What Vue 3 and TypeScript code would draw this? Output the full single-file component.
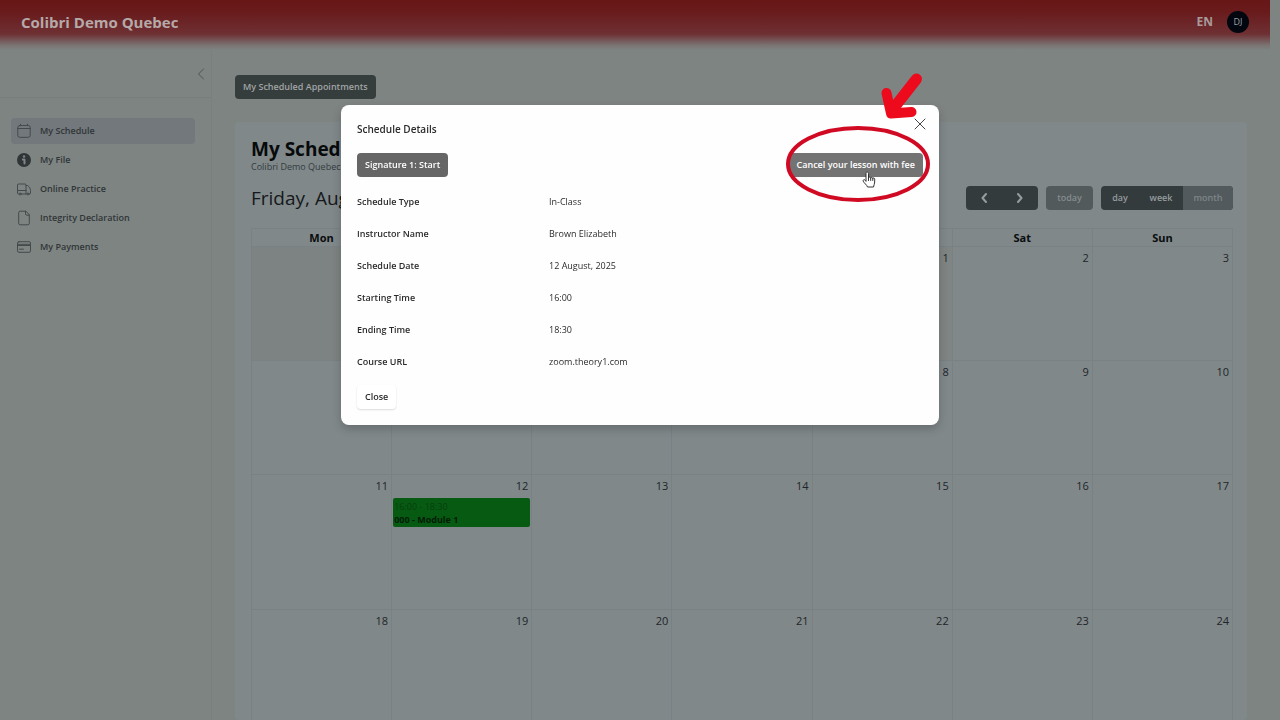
<script setup lang="ts">
interface Cell {
  day: number
  outside?: boolean
  today?: boolean
  event?: { time: string; title: string }
}

const weekdays: string[] = ['Mon', 'Tue', 'Wed', 'Thu', 'Fri', 'Sat', 'Sun']

const weeks: Cell[][] = [
  [
    { day: 28, outside: true },
    { day: 29, outside: true },
    { day: 30, outside: true },
    { day: 31, outside: true },
    { day: 1, today: true },
    { day: 2 },
    { day: 3 },
  ],
  [4, 5, 6, 7, 8, 9, 10].map((day) => ({ day })),
  [11, 12, 13, 14, 15, 16, 17].map((day) =>
    day === 12 ? { day, event: { time: '16:00 - 18:30', title: '000 - Module 1' } } : { day },
  ),
  [18, 19, 20, 21, 22, 23, 24].map((day) => ({ day })),
]

const menu = [
  { label: 'My Schedule', icon: 'calendar' },
  { label: 'My File', icon: 'info' },
  { label: 'Online Practice', icon: 'truck' },
  { label: 'Integrity Declaration', icon: 'file' },
  { label: 'My Payments', icon: 'card' },
]

const details = [
  { label: 'Schedule Type', value: 'In-Class' },
  { label: 'Instructor Name', value: 'Brown Elizabeth' },
  { label: 'Schedule Date', value: '12 August, 2025' },
  { label: 'Starting Time', value: '16:00' },
  { label: 'Ending Time', value: '18:30' },
  { label: 'Course URL', value: 'zoom.theory1.com' },
]
</script>

<template>
  <div class="page">
    <header class="topbar">
      <h1 class="brand">Colibri Demo Quebec</h1>
      <div class="account">
        <button class="lang" type="button">EN</button>
        <button class="avatar" type="button">DJ</button>
      </div>
    </header>

    <div class="body">
      <aside class="sidebar">
        <div class="sidebar-top">
          <button class="collapse" type="button" aria-label="Collapse menu">
            <svg viewBox="0 0 8 12" width="8" height="12"><path d="M6.5 1 1.5 6l5 5" /></svg>
          </button>
        </div>
        <nav class="menu">
          <a v-for="(item, i) in menu" :key="item.label" href="#" class="item" :class="{ active: i === 0 }">
            <svg class="icon" viewBox="0 0 16 16" width="16" height="16">
              <g v-if="item.icon === 'calendar'">
                <rect x="1.8" y="2.500" width="12.400" height="11.800" rx="2" />
                <path d="M1.800 5.500h12.400M4.500 1.200v1.300M11.500 1.200v1.300" />
              </g>
              <g v-else-if="item.icon === 'info'">
                <circle class="solid" cx="8" cy="8" r="7" />
                <circle class="hole" cx="8" cy="4.500" r="1.200" />
                <path class="stem" d="M6.800 7.500H8.500V11.500" />
              </g>
              <g v-else-if="item.icon === 'truck'">
                <path d="M3 13h-.5a1 1 0 0 1-1-1V4a1 1 0 0 1 1-1h6.500a1 1 0 0 1 1 1v9H5.500M10 4.500h1.500c2 1.200 3 3.200 3 5V12a1 1 0 0 1-1 1M1.500 9.500H10M10 13h.8" />
                <circle cx="4.200" cy="13" r="1" />
                <circle cx="12" cy="13" r="1" />
              </g>
              <g v-else-if="item.icon === 'file'">
                <path d="M9.500 1.200H4.200a1.500 1.500 0 0 0-1.500 1.500v10.600a1.500 1.500 0 0 0 1.500 1.500h7.600a1.500 1.500 0 0 0 1.500-1.500V5.200zM9.500 1.200v2.500a1.500 1.500 0 0 0 1.500 1.500h2.300" />
              </g>
              <g v-else>
                <rect x="1.500" y="2.700" width="13" height="10.600" rx="1.500" />
                <path d="M1.500 5.300h13M1.500 6.500h13M3.500 10.200h4" />
              </g>
            </svg>
            <span>{{ item.label }}</span>
          </a>
        </nav>
      </aside>

      <main class="content">
        <button class="btn dark appointments" type="button">My Scheduled Appointments</button>
        <section class="card">
          <h2 class="title">My Schedule</h2>
          <p class="subtitle">Colibri Demo Quebec</p>
          <div class="toolbar">
            <p class="date">Friday, August 1, 2025</p>
            <div class="tools">
              <div class="group arrows">
                <button type="button" aria-label="Previous">
                  <svg viewBox="0 0 6 10" width="6" height="10"><path d="M5 1 1.500 5 5 9" /></svg>
                </button>
                <button type="button" aria-label="Next">
                  <svg viewBox="0 0 6 10" width="6" height="10"><path d="M1 1l3.500 4L1 9" /></svg>
                </button>
              </div>
              <button class="today" type="button">today</button>
              <div class="group views">
                <button type="button">day</button>
                <button type="button">week</button>
                <button type="button" class="current">month</button>
              </div>
            </div>
          </div>
          <table class="calendar">
            <thead>
              <tr>
                <th v-for="d in weekdays" :key="d" scope="col">{{ d }}</th>
              </tr>
            </thead>
            <tbody>
              <tr v-for="(week, w) in weeks" :key="w" :class="{ tall: w > 1 }">
                <td v-for="cell in week" :key="cell.day" :class="{ outside: cell.outside, now: cell.today }">
                  <div class="day">{{ cell.day }}</div>
                  <a v-if="cell.event" class="event" href="#">
                    <span class="event-time">{{ cell.event.time }}</span>
                    <span class="event-title">{{ cell.event.title }}</span>
                  </a>
                </td>
              </tr>
            </tbody>
          </table>
        </section>
      </main>
    </div>

    <div class="overlay">
      <section class="dialog" role="dialog" aria-modal="true" aria-labelledby="dialog-title">
        <button class="dismiss" type="button" aria-label="Dismiss">
          <svg viewBox="0 0 12 12" width="12" height="12"><path d="M1 1l10 10M11 1 1 11" /></svg>
        </button>
        <h2 id="dialog-title" class="dialog-title">Schedule Details</h2>
        <div class="actions">
          <button class="btn gray" type="button">Signature 1: Start</button>
          <div class="cancel-wrap">
            <button class="btn gray light" type="button">Cancel your lesson with fee</button>
            <svg class="marker" viewBox="0 0 150 136" width="150" height="136" aria-hidden="true">
              <ellipse cx="75" cy="95" rx="70" ry="36" />
              <path class="shaft" d="M133.500 10 110 40" />
              <path class="head" d="M103.500 24 108 44.500 128.500 43" />
            </svg>
            <svg class="pointer" viewBox="0 0 14 18" width="14" height="18" aria-hidden="true">
              <path d="M4 10V2.500C4 .5 6.500.5 6.500 2.500V7c0-1.300 2.200-1.200 2.200.2 0-1.200 2.100-1 2.100.3 0-1 1.900-.8 1.900.6V11c0 2-1 3-1.200 5H5.500C5 14 2 12 1.200 10.200.8 8.800 2.200 8 3 9z" />
              <path d="M6.500 7v2.500M8.700 7.200v2.300M10.800 7.500v2" />
            </svg>
          </div>
        </div>
        <dl class="details">
          <div v-for="row in details" :key="row.label" class="row">
            <dt>{{ row.label }}</dt>
            <dd>{{ row.value }}</dd>
          </div>
        </dl>
        <button class="btn close" type="button">Close</button>
      </section>
    </div>
  </div>
</template>

<style>
body {
  background: #7e8482;
  overflow: hidden;
}
</style>

<style scoped>
* {
  box-sizing: border-box;
}
.page {
  height: 100vh;
  overflow: hidden;
  display: flex;
  flex-direction: column;
  background: #7e8482;
  color: #2a3032;
  font-family: 'Open Sans', 'Noto Sans', sans-serif;
  font-size: 9px;
  line-height: 12px;
}
button {
  border: 0;
  padding: 0;
  background: none;
  font: inherit;
  color: inherit;
  cursor: pointer;
}
h1,
h2,
p,
dl,
dd {
  margin: 0;
}
svg {
  display: block;
  fill: none;
  stroke: currentColor;
  stroke-linecap: round;
  stroke-linejoin: round;
}
.topbar {
  height: 50px;
  flex: none;
  margin-right: 10px;
  padding: 0 21px 6px;
  display: flex;
  align-items: center;
  justify-content: space-between;
  background: linear-gradient(#681616 0, #691b1c 12px, #6e3033 34px, #7a7271 45px, #7e8482 50px);
}
.brand {
  font-size: 15px;
  line-height: 20px;
  font-weight: 700;
  color: #b5a9a9;
}
.account {
  display: flex;
  align-items: center;
  gap: 14px;
}
.lang {
  font-size: 12px;
  font-weight: 700;
  color: #a99b9c;
}
.avatar {
  width: 22px;
  height: 22px;
  border-radius: 50%;
  background: #02060f;
  color: #9aa1a6;
}
.body {
  flex: 1;
  min-height: 0;
  display: flex;
}
.sidebar {
  width: 212px;
  flex: none;
  border-right: 1px solid #7a807f;
}
.sidebar-top {
  height: 48px;
  border-bottom: 1px solid #787e7d;
  display: flex;
  align-items: center;
  justify-content: flex-end;
  padding-right: 6px;
}
.collapse {
  color: #4d5454;
}
.menu {
  padding: 20px 16px 0 11px;
  display: flex;
  flex-direction: column;
  gap: 3px;
}
.item {
  height: 26px;
  padding-left: 5px;
  border-radius: 4px;
  display: flex;
  align-items: center;
  gap: 8px;
  color: #303638;
  font-weight: 600;
  text-decoration: none;
}
.item.active {
  background: #73787c;
}
.icon {
  color: #444a4c;
}
.solid {
  fill: #303537;
  stroke: none;
}
.hole {
  fill: #7e8482;
  stroke: none;
}
.stem {
  stroke: #7e8482;
  stroke-width: 2;
}
.content {
  flex: 1;
  min-width: 0;
  padding: 25px 33px 0 23px;
  display: flex;
  flex-direction: column;
  align-items: flex-start;
}
.btn {
  height: 24px;
  padding: 0 8px;
  border-radius: 4px;
  font-weight: 600;
  white-space: nowrap;
}
.dark {
  background: #363d3d;
  color: #a0a5a5;
}
.card {
  align-self: stretch;
  flex: 1;
  min-height: 0;
  overflow: hidden;
  margin-top: 23px;
  padding: 16px 14px 0 16px;
  border-radius: 4px;
  background: #80888a;
}
.title {
  font-size: 19px;
  line-height: 23px;
  font-weight: 700;
  color: #070a0b;
}
.subtitle {
  color: #343b3e;
}
.toolbar {
  margin-top: 9px;
  display: flex;
  justify-content: space-between;
  align-items: center;
}
.date {
  font-size: 19px;
  line-height: 32px;
  color: #15191b;
}
.tools {
  display: flex;
  gap: 8px;
}
.group {
  display: flex;
  border-radius: 4px;
  overflow: hidden;
  background: #343b3d;
}
.tools button {
  height: 24px;
  display: flex;
  align-items: center;
  justify-content: center;
  color: #959c9e;
  font-weight: 600;
}
.arrows button {
  width: 36px;
}
.arrows svg {
  stroke-width: 2;
}
.tools .today {
  width: 47px;
  border-radius: 4px;
  background: #525a5c;
  color: #858c8e;
}
.views button:nth-child(1) {
  width: 38px;
}
.views button:nth-child(2) {
  width: 44px;
}
.views .current {
  width: 50px;
  background: #525a5d;
  color: #7e8688;
}
.calendar {
  width: 100%;
  margin-top: 14px;
  table-layout: fixed;
  border-collapse: collapse;
}
.calendar th,
.calendar td {
  border: 1px solid #798184;
  padding: 0;
}
.calendar th {
  height: 18px;
  font-size: 11px;
  line-height: 16px;
  font-weight: 700;
  color: #0a0d0e;
}
.calendar td {
  height: 114px;
  vertical-align: top;
}
.calendar .tall td {
  height: 135px;
}
.calendar .outside {
  background: #7d8382;
}
.calendar .now {
  background: #7f8583;
}
.day {
  padding: 3px 3px 0 0;
  font-size: 11px;
  line-height: 16px;
  text-align: right;
  color: #202628;
}
.event {
  display: flex;
  flex-direction: column;
  margin: 4px 1px 0;
  padding: 2px 1px 1px;
  border-radius: 2px;
  background: #065a12;
  color: #031c06;
  line-height: 13px;
  text-decoration: none;
}
.event-time {
  color: #063f0d;
}
.event-title {
  font-weight: 700;
}
.overlay {
  position: fixed;
  inset: 0;
  display: flex;
  align-items: flex-start;
  justify-content: center;
  padding-top: 105px;
}
.dialog {
  position: relative;
  width: 598px;
  padding: 16px;
  border-radius: 8px;
  background: #fefefe;
  color: #2b2b2b;
  box-shadow: 0 4px 10px rgba(0, 0, 0, 0.2);
}
.dismiss {
  position: absolute;
  top: 13px;
  right: 13px;
  color: #444;
}
.dialog-title {
  font-size: 10px;
  line-height: 16px;
  font-weight: 600;
}
.actions {
  margin-top: 16px;
  display: flex;
  justify-content: space-between;
}
.gray {
  background: #666;
  color: #fff;
}
.light {
  background: #737373;
}
.cancel-wrap {
  position: relative;
}
.marker {
  position: absolute;
  right: -10px;
  top: -84px;
  pointer-events: none;
}
.marker ellipse {
  stroke: #d10a24;
  stroke-width: 4;
}
.marker .shaft {
  stroke: #ed0a1c;
  stroke-width: 11;
}
.marker .head {
  stroke: #ed0a1c;
  stroke-width: 10;
}
.pointer {
  position: absolute;
  right: 47px;
  top: 18px;
  stroke: #333;
  fill: #fff;
}
.details {
  margin-top: 9px;
}
.row {
  height: 32px;
  display: grid;
  grid-template-columns: 192px 1fr;
  align-items: center;
}
.row dt {
  font-weight: 600;
}
.close {
  margin-top: 7px;
  background: #fff;
  box-shadow: 0 1px 2px rgba(0, 0, 0, 0.14);
}
</style>
